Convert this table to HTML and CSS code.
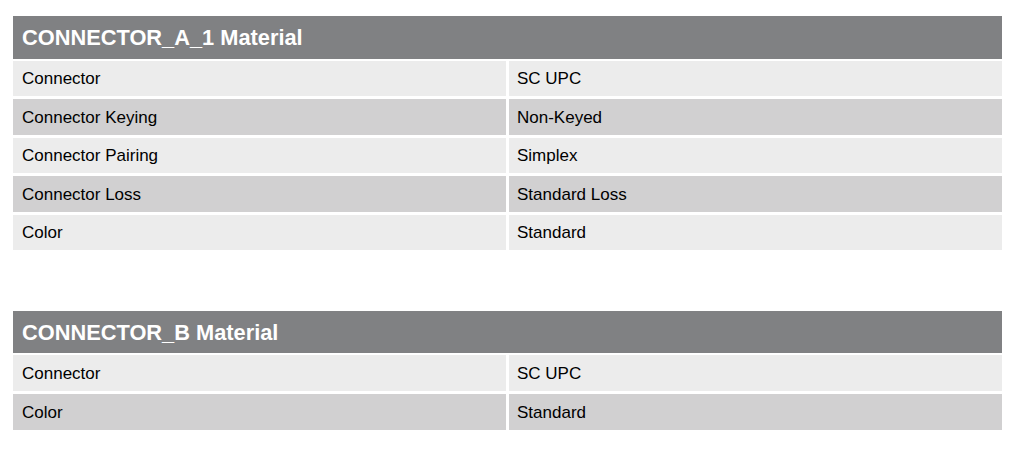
FILE: index.html
```html
<!DOCTYPE html>
<html lang="en">
<head>
<meta charset="utf-8">
<title>Connector Materials</title>
<link rel="stylesheet" href="styles.css">
</head>
<body>
<div class="page">
  <section class="spec">
    <div class="spec-title">CONNECTOR_A_1 Material</div>
    <div class="spec-rows">
      <div class="row light"><div class="cell">Connector</div><div class="cell">SC UPC</div></div>
      <div class="row dark"><div class="cell">Connector Keying</div><div class="cell">Non-Keyed</div></div>
      <div class="row light"><div class="cell">Connector Pairing</div><div class="cell">Simplex</div></div>
      <div class="row dark"><div class="cell">Connector Loss</div><div class="cell">Standard Loss</div></div>
      <div class="row light"><div class="cell">Color</div><div class="cell">Standard</div></div>
    </div>
  </section>
  <section class="spec">
    <div class="spec-title">CONNECTOR_B Material</div>
    <div class="spec-rows">
      <div class="row light"><div class="cell">Connector</div><div class="cell">SC UPC</div></div>
      <div class="row dark"><div class="cell">Color</div><div class="cell">Standard</div></div>
    </div>
  </section>
</div>
</body>
</html>
```
FILE: styles.css
```css
html, body {
  margin: 0;
  padding: 0;
  background: #ffffff;
}
body {
  font-family: "Liberation Sans", Arial, sans-serif;
  color: #000000;
}
.page {
  padding: 16px 0 0 13px;
  display: flex;
  flex-direction: column;
  gap: 60.5px;
}
.spec {
  width: 989px;
  display: flex;
  flex-direction: column;
  gap: 2px;
}
.spec-title {
  background: #808183;
  color: #ffffff;
  font-weight: bold;
  font-size: 21.8px;
  height: 42.5px;
  line-height: 43px;
  padding-left: 9px;
  box-sizing: border-box;
}
.spec-rows {
  display: flex;
  flex-direction: column;
  gap: 3px;
}
.row {
  display: grid;
  grid-template-columns: 1fr 1fr;
  grid-template-rows: 35.6px;
  column-gap: 3px;
  height: 35.6px;
}
.cell {
  font-size: 17px;
  line-height: 34px;
  padding: 1.5px 0 0 9px;
  box-sizing: border-box;
  white-space: nowrap;
}
.cell + .cell {
  padding-left: 8px;
}
.light .cell {
  background: #ececec;
}
.dark .cell {
  background: #d1d0d1;
}
```
